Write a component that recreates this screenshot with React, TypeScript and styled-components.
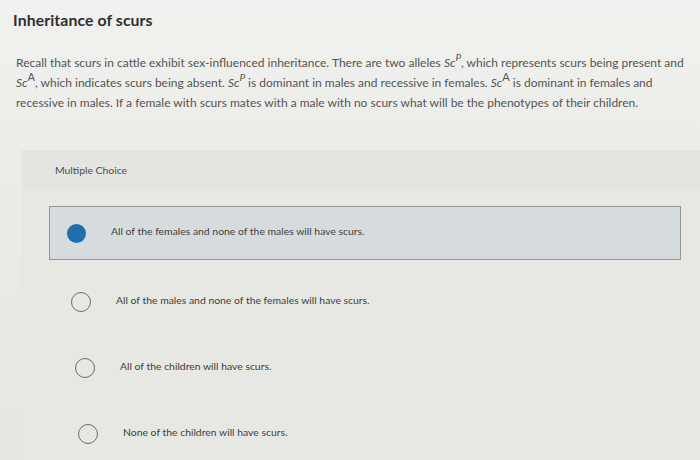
import React from "react"
import styled, { createGlobalStyle } from "styled-components"

const Global = createGlobalStyle`
  html, body {
    margin: 0;
    padding: 0;
    background: #e9e9e6;
  }
  body {
    font-family: Lato, "Open Sans", sans-serif;
    color: #4a4a48;
  }
`

const Page = styled.div`
  width: 700px;
  height: 460px;
  overflow: hidden;
  display: flex;
  flex-direction: column;
  background: linear-gradient(180deg, #f1f1ef 0%, #ebebe8 40%, #e6e6e3 100%);
`

const Header = styled.div`
  padding: 10px 0 0 13px;
`

const Title = styled.h1`
  margin: 0;
  font-size: 15.8px;
  font-weight: 700;
  color: #2f2f2f;
  letter-spacing: 0.1px;
`

const Question = styled.p`
  margin: 24px 0 0 16px;
  font-size: 12px;
  line-height: 20px;
  color: #555553;
  white-space: nowrap;
`

const Allele = styled.span`
  font-style: italic;
`

const Sup = styled.sup<{ $big?: boolean }>`
  font-size: ${(p) => (p.$big ? "11px" : "10px")};
  font-style: ${(p) => (p.$big ? "normal" : "italic")};
  position: relative;
  top: -1px;
  vertical-align: super;
  line-height: 0;
`

const Panel = styled.section`
  margin: 37px 0 0 22px;
  flex: 1;
  background: #e7e7e4;
  display: flex;
  flex-direction: column;
`

const PanelHead = styled.div`
  height: 40px;
  display: flex;
  align-items: center;
  padding-left: 33px;
  font-size: 10.4px;
  color: #4d4d4b;
  background: #e4e4e1;
`

const Options = styled.div`
  display: flex;
  flex-direction: column;
  padding-top: 16px;
`

const Option = styled.div<{ $selected?: boolean; $shift: number }>`
  height: ${(p) => (p.$selected ? "54px" : "66px")};
  margin: ${(p) => (p.$selected ? "0 19px 9px 27px" : "0")};
  padding-left: ${(p) => (p.$selected ? 17 : 49 + p.$shift)}px;
  display: flex;
  align-items: center;
  gap: 25px;
  border: ${(p) => (p.$selected ? "1.5px solid #8e9899" : "none")};
  background: ${(p) => (p.$selected ? "#d6dcde" : "transparent")};
  box-sizing: border-box;
`

const Radio = styled.span<{ $checked?: boolean }>`
  width: ${(p) => (p.$checked ? "19px" : "20px")};
  height: ${(p) => (p.$checked ? "19px" : "20px")};
  border-radius: 50%;
  box-sizing: border-box;
  flex: none;
  background: ${(p) => (p.$checked ? "#1f6fae" : "transparent")};
  border: ${(p) => (p.$checked ? "none" : "1.6px solid #6b6b69")};
`

const Label = styled.span`
  font-size: 10.4px;
  color: #40403e;
  margin-top: -5px;
`

const answers = [
  { text: "All of the males and none of the females will have scurs.", shift: 0 },
  { text: "All of the children will have scurs.", shift: 4 },
  { text: "None of the children will have scurs.", shift: 7 },
]

export default function App() {
  return (
    <Page>
      <Global />
      <Header>
        <Title>Inheritance of scurs</Title>
      </Header>
      <Question>
        Recall that scurs in cattle exhibit sex-influenced inheritance. There are two alleles{" "}
        <Allele>
          Sc<Sup>P</Sup>
        </Allele>
        , which represents scurs being present and
        <br />
        <Allele>
          Sc<Sup $big>A</Sup>
        </Allele>
        , which indicates scurs being absent.{" "}
        <Allele>
          Sc<Sup>P</Sup>
        </Allele>{" "}
        is dominant in males and recessive in females.{" "}
        <Allele>
          Sc<Sup $big>A</Sup>
        </Allele>{" "}
        is dominant in females and
        <br />
        recessive in males. If a female with scurs mates with a male with no scurs what will be the phenotypes of
        their children.
      </Question>
      <Panel>
        <PanelHead>Multiple Choice</PanelHead>
        <Options>
          <Option $selected $shift={0}>
            <Radio $checked />
            <Label>All of the females and none of the males will have scurs.</Label>
          </Option>
          {answers.map((a) => (
            <Option key={a.text} $shift={a.shift}>
              <Radio />
              <Label>{a.text}</Label>
            </Option>
          ))}
        </Options>
      </Panel>
    </Page>
  )
}
